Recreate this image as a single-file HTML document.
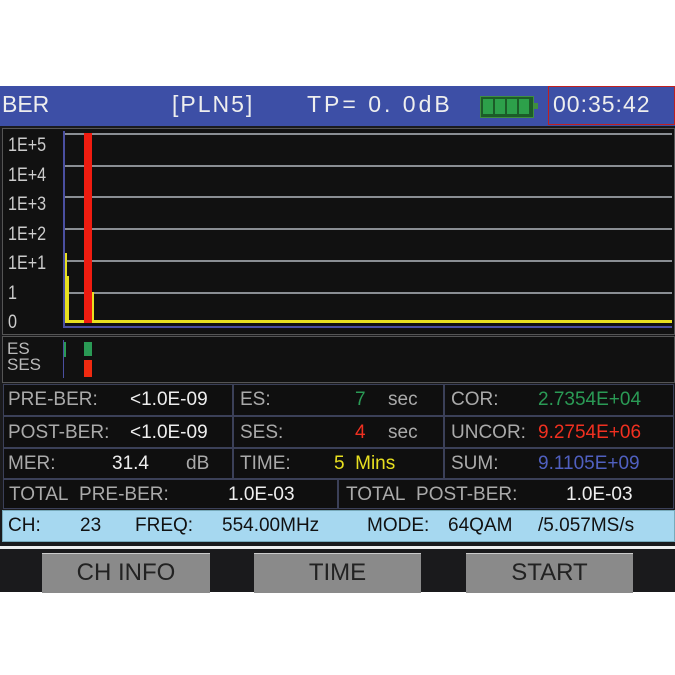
<!DOCTYPE html><html><head><style>
body{margin:0;width:675px;height:675px;background:#fff;position:relative;overflow:hidden;font-family:"Liberation Sans",sans-serif}
.a{position:absolute}
.t{position:absolute;white-space:nowrap;line-height:1}
.g{position:absolute;left:65px;width:607px;height:2px;background:#8a8e94}
.c{position:absolute;background:#0f0f0f;border:1px solid #3b4058}
</style></head><body>
<div class="a" style="left:0;top:86px;width:675px;height:506px;background:#1a1a1c"></div>
<div class="a" style="left:0;top:86px;width:675px;height:40px;background:#3d4fa6"></div>
<div class="t" style="left:2px;top:93px;font-size:23px;color:#eee">BER</div>
<div class="t" style="left:172px;top:93px;font-size:23px;color:#eee;letter-spacing:2px">[PLN5]</div>
<div class="t" style="left:307px;top:93px;font-size:23px;color:#eee;letter-spacing:3px">TP=&nbsp;0.&nbsp;0dB</div>
<div class="a" style="left:480px;top:96px;width:52px;height:20px;border:1px solid #3f8f3f;background:#1c5c28"></div>
<div class="a" style="left:483px;top:99px;width:10px;height:15px;background:#2da04a;box-shadow:12px 0 #2da04a,24px 0 #2da04a,36px 0 #2da04a"></div>
<div class="a" style="left:533px;top:103px;width:5px;height:6px;background:#3f8f3f"></div>
<div class="a" style="left:548px;top:86px;width:125px;height:37px;border:1px solid #c02020"></div>
<div class="t" style="left:553px;top:93px;font-size:23px;color:#eee;letter-spacing:1px">00:35:42</div>
<div class="a" style="left:2px;top:128px;width:671px;height:205px;background:#111;border:1px solid #555"></div>
<div class="a" style="left:63px;top:131px;width:2px;height:197px;background:#4a4fa0"></div>
<div class="a" style="left:63px;top:326px;width:609px;height:2px;background:#4a4fa0"></div>
<div class="g" style="top:133px"></div><div class="g" style="top:165px"></div><div class="g" style="top:196px"></div><div class="g" style="top:228px"></div><div class="g" style="top:260px"></div><div class="g" style="top:292px"></div>
<div class="a" style="left:65px;top:320px;width:607px;height:3px;background:#e8e020"></div>
<div class="a" style="left:65px;top:253px;width:2px;height:68px;background:#e8e020"></div>
<div class="a" style="left:67px;top:276px;width:2px;height:45px;background:#e8e020"></div>
<div class="a" style="left:92px;top:292px;width:2px;height:29px;background:#e8e020"></div>
<div class="a" style="left:84px;top:133px;width:8px;height:190px;background:#f01c10"></div>
<div class="t" style="left:8px;top:131px;font-size:19px;color:#ccc;line-height:29.5px;transform:scaleX(0.85);transform-origin:0 0">1E+5<br>1E+4<br>1E+3<br>1E+2<br>1E+1<br>1<br>0</div>
<div class="a" style="left:2px;top:336px;width:671px;height:45px;background:#111;border:1px solid #555"></div>
<div class="t" style="left:7px;top:341px;font-size:17px;color:#bbb;line-height:16px">ES<br>SES</div>
<div class="a" style="left:63px;top:340px;width:1px;height:38px;background:#4a4fa0"></div>
<div class="a" style="left:64px;top:342px;width:2px;height:15px;background:#2a9a55"></div>
<div class="a" style="left:84px;top:342px;width:8px;height:14px;background:#2a9a55"></div>
<div class="a" style="left:84px;top:360px;width:8px;height:17px;background:#f02a10"></div>
<div class="c" style="left:3px;top:384px;width:228px;height:30px"></div>
<div class="c" style="left:233px;top:384px;width:209px;height:30px"></div>
<div class="c" style="left:444px;top:384px;width:228px;height:30px"></div>
<div class="c" style="left:3px;top:416px;width:228px;height:30px"></div>
<div class="c" style="left:233px;top:416px;width:209px;height:30px"></div>
<div class="c" style="left:444px;top:416px;width:228px;height:30px"></div>
<div class="c" style="left:3px;top:448px;width:228px;height:29px"></div>
<div class="c" style="left:233px;top:448px;width:209px;height:29px"></div>
<div class="c" style="left:444px;top:448px;width:228px;height:29px"></div>
<div class="c" style="left:3px;top:479px;width:333px;height:28px"></div>
<div class="c" style="left:338px;top:479px;width:334px;height:28px"></div>
<div class="t" style="left:8px;top:390px;font-size:19px;color:#aaa">PRE-BER:</div>
<div class="t" style="left:130px;top:390px;font-size:19px;color:#eee">&lt;1.0E-09</div>
<div class="t" style="left:240px;top:390px;font-size:19px;color:#aaa">ES:</div>
<div class="t" style="left:355px;top:390px;font-size:19px;color:#2a9a55">7</div>
<div class="t" style="left:388px;top:390px;font-size:19px;color:#aaa">sec</div>
<div class="t" style="left:451px;top:390px;font-size:19px;color:#aaa">COR:</div>
<div class="t" style="left:538px;top:390px;font-size:19px;color:#2a9a55">2.7354E+04</div>
<div class="t" style="left:8px;top:423px;font-size:19px;color:#aaa">POST-BER:</div>
<div class="t" style="left:130px;top:423px;font-size:19px;color:#eee">&lt;1.0E-09</div>
<div class="t" style="left:240px;top:423px;font-size:19px;color:#aaa">SES:</div>
<div class="t" style="left:355px;top:423px;font-size:19px;color:#f03020">4</div>
<div class="t" style="left:388px;top:423px;font-size:19px;color:#aaa">sec</div>
<div class="t" style="left:451px;top:423px;font-size:19px;color:#aaa">UNCOR:</div>
<div class="t" style="left:538px;top:423px;font-size:19px;color:#f03020">9.2754E+06</div>
<div class="t" style="left:8px;top:454px;font-size:19px;color:#aaa">MER:</div>
<div class="t" style="left:112px;top:454px;font-size:19px;color:#eee">31.4</div>
<div class="t" style="left:186px;top:454px;font-size:19px;color:#aaa">dB</div>
<div class="t" style="left:240px;top:454px;font-size:19px;color:#aaa">TIME:</div>
<div class="t" style="left:334px;top:454px;font-size:19px;color:#e8e020">5&nbsp;&nbsp;Mins</div>
<div class="t" style="left:451px;top:454px;font-size:19px;color:#aaa">SUM:</div>
<div class="t" style="left:538px;top:454px;font-size:19px;color:#5060c0">9.1105E+09</div>
<div class="t" style="left:9px;top:485px;font-size:19px;color:#aaa">TOTAL&nbsp;&nbsp;PRE-BER:</div>
<div class="t" style="left:228px;top:485px;font-size:19px;color:#eee">1.0E-03</div>
<div class="t" style="left:346px;top:485px;font-size:19px;color:#aaa">TOTAL&nbsp;&nbsp;POST-BER:</div>
<div class="t" style="left:566px;top:485px;font-size:19px;color:#eee">1.0E-03</div>
<div class="a" style="left:2px;top:510px;width:671px;height:30px;background:#a6d8f0;border:1px solid #7ab"></div>
<div class="t" style="left:8px;top:516px;font-size:19px;color:#111">CH:</div>
<div class="t" style="left:80px;top:516px;font-size:19px;color:#111">23</div>
<div class="t" style="left:135px;top:516px;font-size:19px;color:#111">FREQ:</div>
<div class="t" style="left:222px;top:516px;font-size:19px;color:#111">554.00MHz</div>
<div class="t" style="left:367px;top:516px;font-size:19px;color:#111">MODE:</div>
<div class="t" style="left:448px;top:516px;font-size:19px;color:#111">64QAM</div>
<div class="t" style="left:538px;top:516px;font-size:19px;color:#111">/5.057MS/s</div>
<div class="a" style="left:0;top:546px;width:675px;height:3px;background:#eee"></div>
<div class="a" style="left:42px;top:553px;width:168px;height:39px;background:#8a8a8a;border-top:1px solid #ccc"></div>
<div class="a" style="left:254px;top:553px;width:167px;height:39px;background:#8a8a8a;border-top:1px solid #ccc"></div>
<div class="a" style="left:466px;top:553px;width:167px;height:39px;background:#8a8a8a;border-top:1px solid #ccc"></div>
<div class="t" style="left:42px;top:561px;width:168px;text-align:center;font-size:24px;color:#222">CH INFO</div>
<div class="t" style="left:254px;top:561px;width:167px;text-align:center;font-size:24px;color:#222">TIME</div>
<div class="t" style="left:466px;top:561px;width:167px;text-align:center;font-size:24px;color:#222">START</div>
</body></html>
